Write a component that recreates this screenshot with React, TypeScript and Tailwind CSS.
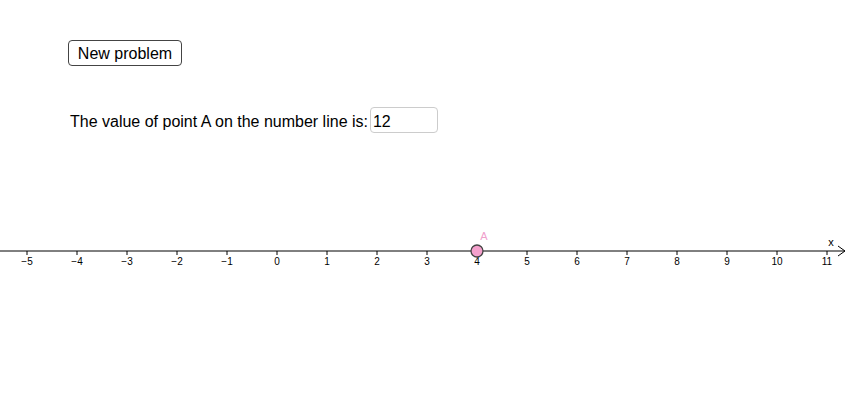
import React from "react";

const TICKS = Array.from({ length: 17 }, (_, i) => i - 5);
const ORIGIN_X = 277;
const UNIT = 50;
const AXIS_Y = 51;

function label(v: number) {
  return v < 0 ? `\u2212${Math.abs(v)}` : String(v);
}

function NumberLine({ point }: { point: number }) {
  const px = ORIGIN_X + UNIT * point;
  return (
    <svg width="847" height="100" className="block" style={{ fontFamily: '"Liberation Sans", Arial, sans-serif' }}>
      <line x1="0" y1={AXIS_Y} x2="845" y2={AXIS_Y} stroke="#000" strokeWidth="1" />
      <polyline points={`838,${AXIS_Y - 5} 845,${AXIS_Y} 838,${AXIS_Y + 5}`} fill="none" stroke="#000" strokeWidth="1" />
      <text x="831" y={AXIS_Y - 5} fontSize="11" textAnchor="middle" fill="#000">
        x
      </text>
      {TICKS.map((v) => {
        const x = ORIGIN_X + UNIT * v;
        return (
          <g key={v}>
            <line x1={x} y1={AXIS_Y} x2={x} y2={AXIS_Y + 4} stroke="#000" strokeWidth="1" />
            <text x={x} y={AXIS_Y + 14} fontSize="10" textAnchor="middle" fill="#000">
              {label(v)}
            </text>
          </g>
        );
      })}
      <circle cx={px} cy={AXIS_Y} r="6" fill="#f4a0cc" stroke="#444" strokeWidth="1.3" />
      <text x={px + 7} y={AXIS_Y - 11} fontSize="11" textAnchor="middle" fill="#f0a0cc">
        A
      </text>
    </svg>
  );
}

export default function App() {
  return (
    <div className="relative w-[847px] h-[416px] overflow-hidden bg-white font-['Liberation_Sans',Arial,sans-serif] text-[16px] text-black">
      <div className="pl-[68px] pt-[40px]">
        <button className="h-[26px] w-[114px] rounded-[4px] border border-[#444] bg-white pt-[1px] text-[16px] leading-none text-black">
          New problem
        </button>
      </div>
      <div className="mt-[41px] flex items-center pl-[70px]">
        <span className="mt-[4px] leading-none">The value of point A on the number line is:</span>
        <input
          defaultValue="12"
          className="ml-[2px] h-[26px] w-[68px] rounded-[4px] border border-[#cccccc] bg-white px-[2px] pt-[4px] text-[16px] text-black outline-none"
        />
      </div>
      <div className="mt-[67px]">
        <NumberLine point={4} />
      </div>
    </div>
  );
}
